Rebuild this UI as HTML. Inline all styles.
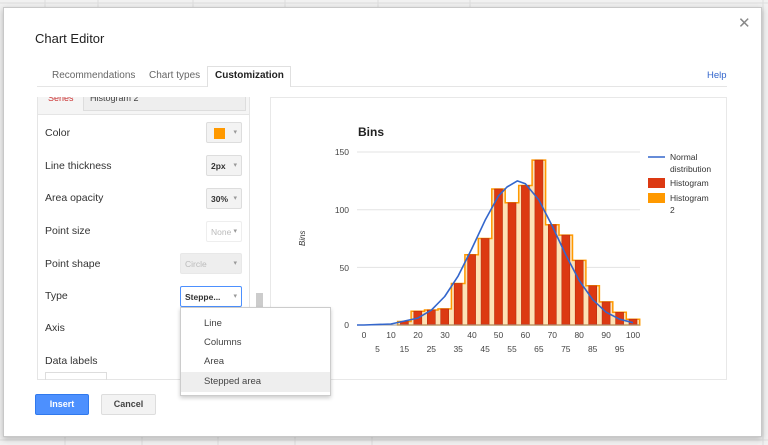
<!DOCTYPE html>
<html><head><style>
*{margin:0;padding:0;box-sizing:border-box}
body{width:768px;height:445px;overflow:hidden;background:#f1f1f1;font-family:"Liberation Sans",sans-serif;position:relative}
.a{position:absolute}
.lbl{position:absolute;left:45px;font-size:10.5px;color:#333}
.ctl{position:absolute;background:#f3f3f3;border:1px solid #ddd;border-radius:2px;font-size:8.5px;font-weight:bold;color:#333;padding:5px 0 0 4px}
.ctl:after{content:"▾";position:absolute;right:4px;top:5px;font-size:7px;color:#999;font-weight:normal}
.mi{position:absolute;left:23px;font-size:9.5px;color:#444}
</style></head><body>
<svg class="a" style="left:0;top:0" width="768" height="445">
<g stroke="#ddd" stroke-width="1">
<line x1="0" y1="3" x2="768" y2="3"/><line x1="0" y1="440" x2="768" y2="440"/>
<line x1="45" y1="0" x2="45" y2="7"/><line x1="98" y1="0" x2="98" y2="7"/><line x1="193" y1="0" x2="193" y2="7"/><line x1="285" y1="0" x2="285" y2="7"/><line x1="378" y1="0" x2="378" y2="7"/><line x1="470" y1="0" x2="470" y2="7"/>
<line x1="65" y1="437" x2="65" y2="445"/><line x1="142" y1="437" x2="142" y2="445"/><line x1="218" y1="437" x2="218" y2="445"/><line x1="295" y1="437" x2="295" y2="445"/><line x1="372" y1="437" x2="372" y2="445"/>
<line x1="763" y1="0" x2="763" y2="445"/>
</g></svg>
<div class="a" style="left:3px;top:7px;width:759px;height:430px;background:#fff;border:1px solid #c8c8c8;box-shadow:0 2px 6px rgba(0,0,0,.25)"></div>
<div class="a" style="left:35px;top:31px;font-size:13px;color:#222">Chart Editor</div>
<div class="a" style="left:738px;top:14px;font-size:15px;color:#888">✕</div>
<div class="a" style="left:37px;top:86px;width:690px;height:1px;background:#e5e5e5"></div>
<div class="a" style="left:52px;top:70px;font-size:10px;color:#666">Recommendations</div>
<div class="a" style="left:149px;top:70px;font-size:10px;color:#666">Chart types</div>
<div class="a" style="left:207px;top:66px;width:84px;height:21px;border:1px solid #e0e0e0;border-bottom:none;background:#fff"></div>
<div class="a" style="left:215px;top:70px;font-size:10px;font-weight:bold;color:#222">Customization</div>
<div class="a" style="left:707px;top:70px;font-size:9.5px;color:#36c">Help</div>
<div class="a" style="left:37px;top:97px;width:213px;height:283px;border:1px solid #e5e5e5;border-top:none;overflow:hidden">
<div class="a" style="left:0;top:0;width:213px;height:18px;background:#f5f5f5;border-bottom:1px solid #e5e5e5"></div>
<div class="a" style="left:45px;top:-5px;width:163px;height:19px;background:#eee;border:1px solid #ddd"></div>
<div class="a" style="left:10px;top:-4px;font-size:9px;color:#c33">Series</div>
<div class="a" style="left:52px;top:-4px;font-size:9px;color:#444">Histogram 2</div>
</div>
<div class="lbl" style="top:127px">Color</div>
<div class="lbl" style="top:160px">Line thickness</div>
<div class="lbl" style="top:192px">Area opacity</div>
<div class="lbl" style="top:225px">Point size</div>
<div class="lbl" style="top:258px">Point shape</div>
<div class="lbl" style="top:290px">Type</div>
<div class="lbl" style="top:322px">Axis</div>
<div class="lbl" style="top:355px">Data labels</div>
<div class="ctl" style="left:206px;top:122px;width:36px;height:21px"><div style="width:11px;height:11px;background:#f90;margin-left:3px"></div></div>
<div class="ctl" style="left:206px;top:155px;width:36px;height:21px">2px</div>
<div class="ctl" style="left:206px;top:188px;width:36px;height:21px">30%</div>
<div class="ctl" style="left:206px;top:221px;width:36px;height:21px;background:#fff;border-color:#eee;color:#bbb;font-weight:normal">None</div>
<div class="ctl" style="left:180px;top:253px;width:62px;height:21px;background:#eee;border-color:#e8e8e8;color:#bbb;font-weight:normal">Circle</div>
<div class="ctl" style="left:180px;top:286px;width:62px;height:21px;background:#fff;border-color:#4d90fe">Steppe...</div>
<div class="a" style="left:45px;top:372px;width:62px;height:8px;border:1px solid #ddd;border-bottom:none"></div>
<div class="a" style="left:256px;top:293px;width:7px;height:17px;background:#ccc"></div>
<div class="a" style="left:270px;top:97px;width:457px;height:283px;border:1px solid #e8e8e8"></div>
<svg class="a" style="left:0;top:0" width="768" height="445" font-family="Liberation Sans, sans-serif">
<text x="358" y="136" font-size="12" font-weight="bold" fill="#222">Bins</text>
<text transform="translate(305,246) rotate(-90)" font-size="8" font-style="italic" fill="#333">Bins</text>
<g stroke="#e3e3e3"><line x1="357" y1="152" x2="640" y2="152"/><line x1="357" y1="209.7" x2="640" y2="209.7"/><line x1="357" y1="267.4" x2="640" y2="267.4"/></g>
<g font-size="8.5" fill="#444" text-anchor="end"><text x="349" y="155">150</text><text x="349" y="213">100</text><text x="349" y="271">50</text><text x="349" y="328">0</text></g>
<path d="M397.6,325 V321.5 H411.1 V311.2 H424.5 V310 H438 V308.9 H451.4 V283.5 H464.9 V254.7 H478.3 V238.5 H491.8 V189 H505.2 V202.8 H518.7 V185.5 H532.1 V160.1 H545.6 V224.7 H559 V235.1 H572.5 V260.4 H585.9 V285.8 H599.4 V301.9 H612.8 V312.3 H626.3 V319.2 H639.7 V325 Z" fill="#fde2b6" stroke="#f90" stroke-width="1.5"/>
<g fill="#dc3912" stroke="#b8300f" stroke-width=".6">
<rect x="400.4" y="321.5" width="8" height="3.5"/><rect x="413.8" y="311.2" width="8" height="13.8"/><rect x="427.3" y="310" width="8" height="15"/><rect x="440.7" y="308.9" width="8" height="16.1"/><rect x="454.2" y="283.5" width="8" height="41.5"/><rect x="467.6" y="254.7" width="8" height="70.3"/><rect x="481.1" y="238.5" width="8" height="86.5"/><rect x="494.5" y="189" width="8" height="136"/><rect x="508" y="202.8" width="8" height="122.2"/><rect x="521.4" y="185.5" width="8" height="139.5"/><rect x="534.9" y="160.1" width="8" height="164.9"/><rect x="548.3" y="224.7" width="8" height="100.3"/><rect x="561.8" y="235.1" width="8" height="89.9"/><rect x="575.2" y="260.4" width="8" height="64.6"/><rect x="588.7" y="285.8" width="8" height="39.2"/><rect x="602.1" y="301.9" width="8" height="23.1"/><rect x="615.6" y="312.3" width="8" height="12.7"/><rect x="629" y="319.2" width="8" height="5.8"/>
</g>
<line x1="357" y1="325" x2="640" y2="325" stroke="#999"/>
<polyline points="357,325 364,325 390.9,324 417.8,318.1 431.3,310.2 444.7,296.5 458.2,275.9 471.6,249.1 485.1,220.3 498.5,195.9 507,187 517.3,180.9 525.4,183.8 538.9,200 552.3,226.1 565.8,254.9 579.2,280.5 592.7,299.7 606.1,312.2 619.6,319.2 633,322.7" fill="none" stroke="#3366cc" stroke-width="1.6" stroke-linejoin="round"/>
<g font-size="8.5" fill="#444" text-anchor="middle">
<text x="364" y="338">0</text><text x="391" y="338">10</text><text x="418" y="338">20</text><text x="445" y="338">30</text><text x="472" y="338">40</text><text x="498.5" y="338">50</text><text x="525.4" y="338">60</text><text x="552.3" y="338">70</text><text x="579.2" y="338">80</text><text x="606.1" y="338">90</text><text x="633" y="338">100</text>
<text x="377.5" y="352">5</text><text x="404.4" y="352">15</text><text x="431.3" y="352">25</text><text x="458.2" y="352">35</text><text x="485.1" y="352">45</text><text x="512" y="352">55</text><text x="538.9" y="352">65</text><text x="565.8" y="352">75</text><text x="592.7" y="352">85</text><text x="619.6" y="352">95</text>
</g>
<line x1="648" y1="157" x2="665" y2="157" stroke="#3366cc" stroke-width="1.6"/>
<rect x="648" y="178" width="17" height="10" fill="#dc3912"/>
<rect x="648" y="193" width="17" height="10" fill="#f90"/>
<g font-size="8.5" fill="#333"><text x="670" y="160">Normal</text><text x="670" y="172">distribution</text><text x="670" y="186">Histogram</text><text x="670" y="201">Histogram</text><text x="670" y="213">2</text></g>
</svg>
<div class="a" style="left:180px;top:307px;width:151px;height:89px;background:#fff;border:1px solid #ccc;box-shadow:0 2px 4px rgba(0,0,0,.2)">
<div class="a" style="left:0;top:64px;width:149px;height:20px;background:#eee"></div>
<div class="mi" style="top:10px">Line</div>
<div class="mi" style="top:29px">Columns</div>
<div class="mi" style="top:48px">Area</div>
<div class="mi" style="top:68px">Stepped area</div>
</div>
<div class="a" style="left:35px;top:394px;width:54px;height:21px;background:#4d90fe;border:1px solid #3079ed;border-radius:2px;color:#fff;font-size:9px;font-weight:bold;text-align:center;line-height:19px">Insert</div>
<div class="a" style="left:101px;top:394px;width:55px;height:21px;background:#f3f3f3;border:1px solid #ddd;border-radius:2px;color:#444;font-size:9px;font-weight:bold;text-align:center;line-height:19px">Cancel</div>
</body></html>
